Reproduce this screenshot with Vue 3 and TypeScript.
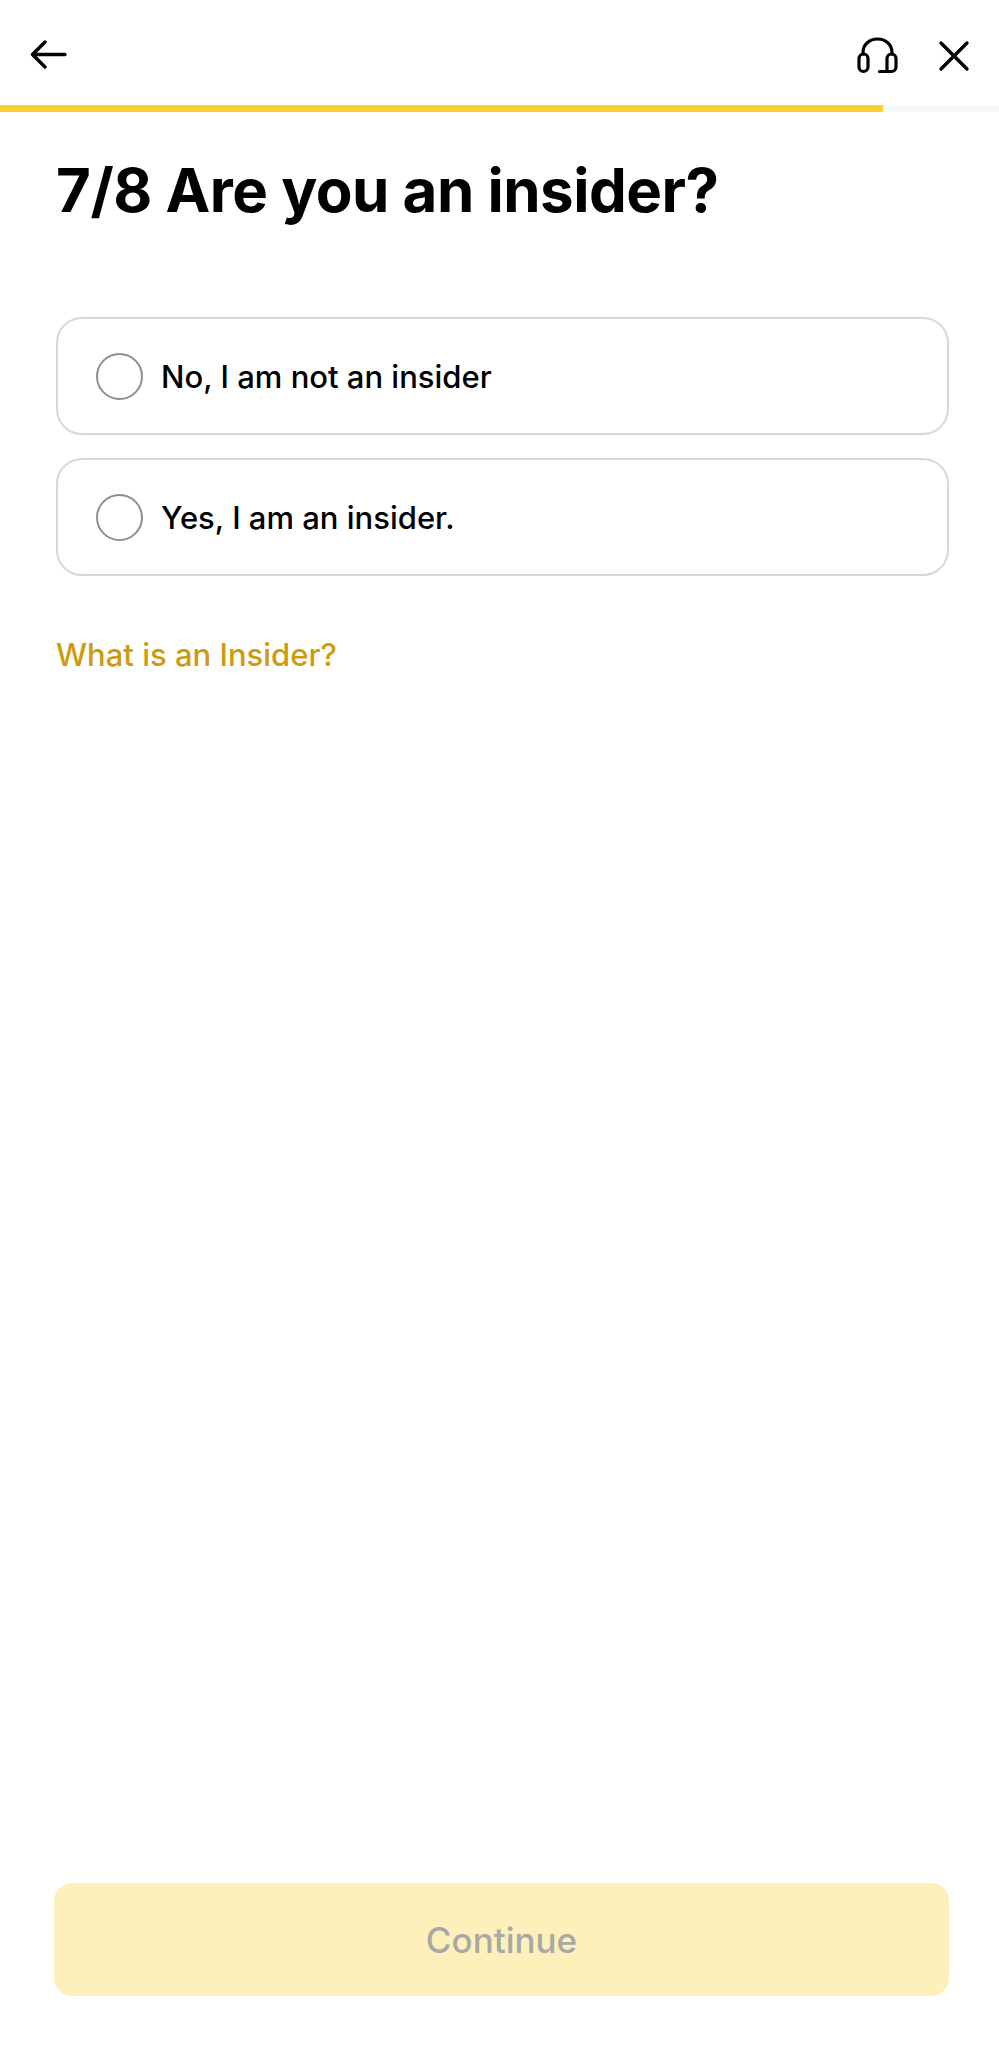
<script setup lang="ts">
const options: string[] = ['No, I am not an insider', 'Yes, I am an insider.']
</script>

<template>
  <div class="page">
    <header class="top">
      <svg class="back" width="38" height="30" viewBox="0 0 38 30" fill="none" stroke="#000" stroke-width="3.4" stroke-linecap="round" stroke-linejoin="round">
        <path d="M35 14.500H3M15 2 2.500 14.500 15 27" />
      </svg>
      <div class="actions">
        <svg width="42" height="38" viewBox="0 0 42 38" fill="none" stroke="#000" stroke-width="3.2" stroke-linecap="round" stroke-linejoin="round">
          <path d="M6 17V15.500C6 7.500 12.500 2 20.500 2S35 7.500 35 15.500V17" />
          <rect x="2" y="17" width="9" height="17.500" rx="4.500" />
          <path d="M30 34.500V21.500a4.500 4.500 0 0 1 9 0v8.500a4.500 4.500 0 0 1-4.500 4.500H22.500" />
        </svg>
        <svg width="32" height="32" viewBox="0 0 32 32" fill="none" stroke="#000" stroke-width="3.400" stroke-linecap="round">
          <path d="M3 3l26 26M29 3 3 29" />
        </svg>
      </div>
    </header>
    <div class="track"><div class="fill"></div></div>
    <main class="content">
      <h1 class="title">7/8 Are you an insider?</h1>
      <div class="options">
        <label v-for="option in options" :key="option" class="option">
          <span class="radio"></span>
          <span class="label">{{ option }}</span>
        </label>
      </div>
      <a class="link">What is an Insider?</a>
    </main>
    <footer class="footer">
      <button class="continue" type="button" disabled>Continue</button>
    </footer>
  </div>
</template>

<style>
body { margin: 0; background: #fff; }
</style>

<style scoped>
.page {
  width: 999px;
  height: 2048px;
  display: flex;
  flex-direction: column;
  background: #fff;
  font-family: Inter, "Liberation Sans", sans-serif;
  color: #000;
}
.top {
  height: 105px;
  box-sizing: border-box;
  padding: 37px 29px 0 30px;
  display: flex;
  justify-content: space-between;
  align-items: flex-start;
}
.back {
  margin-top: 3px;
}
.actions {
  display: flex;
  gap: 39px;
  align-items: flex-start;
}
.actions svg:last-child {
  margin-top: 3px;
}
.track {
  height: 7px;
  background: #f8f8f8;
}
.fill {
  width: 883px;
  height: 100%;
  background: #fbcf33;
}
.content {
  flex: 1;
  padding: 40px 50px 0 56px;
}
.title {
  margin: 0;
  font-size: 60px;
  line-height: 76px;
  font-weight: 700;
  letter-spacing: -0.5px;
  white-space: nowrap;
}
.options {
  margin-top: 89px;
  display: flex;
  flex-direction: column;
  gap: 23px;
}
.option {
  height: 118px;
  box-sizing: border-box;
  border: 2.5px solid #d8d8d8;
  border-radius: 26px;
  padding-left: 38px;
  display: flex;
  align-items: center;
  gap: 18px;
}
.radio {
  width: 47px;
  height: 47px;
  box-sizing: border-box;
  border: 2.5px solid #8e8e8e;
  border-radius: 50%;
}
.label {
  font-size: 31px;
  font-weight: 500;
}
.link {
  display: block;
  margin-top: 60px;
  font-size: 31px;
  font-weight: 500;
  color: #cf9a0e;
}
.footer {
  padding: 0 50px 52px 54px;
}
.continue {
  width: 100%;
  height: 113px;
  border: 0;
  border-radius: 18px;
  background: #fdf0bb;
  color: #a8a8a4;
  font: 500 35px Inter, "Liberation Sans", sans-serif;
}
</style>
